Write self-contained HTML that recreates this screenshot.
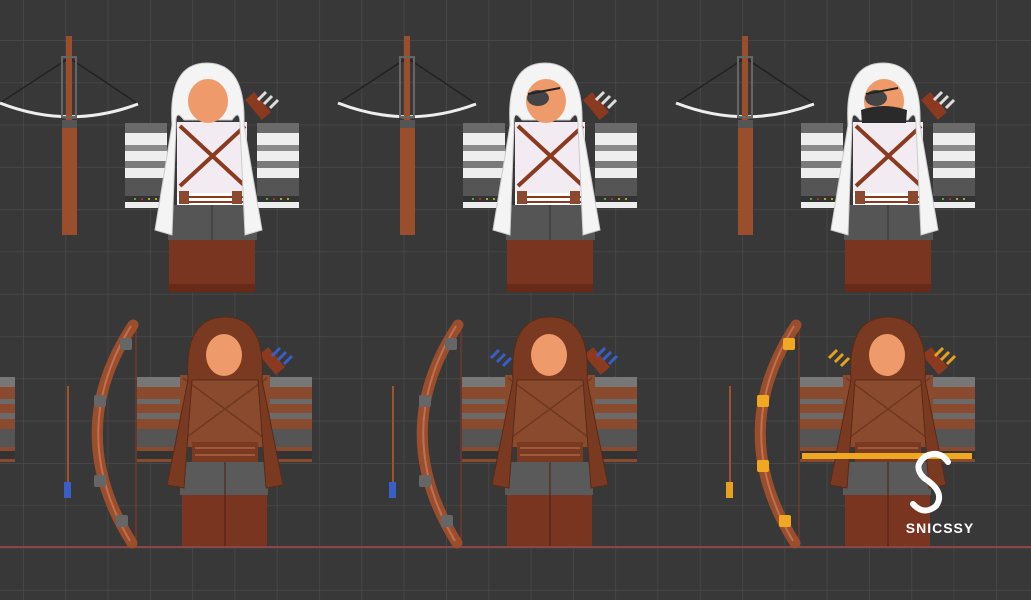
<!DOCTYPE html>
<html><head><meta charset="utf-8"><style>
html,body{margin:0;padding:0;background:#383838;overflow:hidden}
svg{display:block}
</style></head><body>
<svg width="1031" height="600" viewBox="0 0 1031 600" xmlns="http://www.w3.org/2000/svg">
<defs>
<pattern id="grid" x="23" y="40" width="42.3" height="42.3" patternUnits="userSpaceOnUse">
<path d="M0 0H42.3M0 0V42.3" stroke="#4a4a4a" stroke-width="1.5" fill="none"/>
</pattern>
<g id="warm">
<rect x="0" y="0" width="42" height="85" fill="#eee"/>
<rect x="0" y="0" width="42" height="10" fill="#6a6a6a"/>
<rect x="0" y="22" width="42" height="6" fill="#8a8a8a"/>
<rect x="0" y="38" width="42" height="7" fill="#7a7a7a"/>
<rect x="0" y="55" width="42" height="18" fill="#555"/>
<rect x="0" y="73" width="42" height="6" fill="#333"/>
<circle cx="10" cy="76" r="1" fill="#6c3"/><circle cx="17" cy="76" r="1" fill="#c33"/><circle cx="24" cy="76" r="1" fill="#dc3"/><circle cx="31" cy="76" r="1" fill="#dc3"/>
</g>
<g id="white">
<rect x="252" y="93" width="12" height="26" fill="#8b3a1f" transform="rotate(-40 258 106)"/>
<path d="M258 100l8-8M264 104l8-8M270 108l8-8" stroke="#ddd" stroke-width="3"/>
<use href="#warm" x="125" y="123"/>
<use href="#warm" x="257" y="123"/>
<rect x="168" y="205" width="89" height="35" fill="#555"/>
<line x1="212" y1="205" x2="212" y2="292" stroke="#333"/>
<rect x="169" y="240" width="86" height="52" fill="#7a3520"/>
<rect x="169" y="284" width="86" height="8" fill="#6a2a18"/>
<rect x="177" y="122" width="70" height="75" fill="#f2ecf2"/>
<path d="M180 126L245 186M245 126L180 186" stroke="#8b3a1f" stroke-width="4"/>
<rect x="177" y="193" width="70" height="12" fill="#fff"/>
<path d="M180 197H245M180 202H245" stroke="#8b3a1f" stroke-width="2"/>
<rect x="179" y="191" width="10" height="13" fill="#8b4a30"/>
<rect x="232" y="191" width="10" height="13" fill="#8b4a30"/>
<path d="M172 125Q168 63 207 63Q246 63 244 125L262 230L245 235L240 125Q240 108 232 120L184 120Q175 108 176 125L172 235L155 230Z" fill="#f4f4f4" stroke="#ccc"/>
<ellipse cx="208" cy="101" rx="20" ry="22" fill="#ef9a6a"/>
</g>
<g id="cbow">
<path d="M0 103Q35 80 69 58Q103 80 138 104" stroke="#222" stroke-width="1.5" fill="none"/>
<path d="M0 103Q69 130 138 104" stroke="#eee" stroke-width="3" fill="none"/>
<rect x="66" y="36" width="6" height="84" fill="#9a4e2c"/>
<rect x="62" y="57" width="14" height="60" fill="none" stroke="#666" stroke-width="2"/>
<rect x="62" y="120" width="15" height="115" fill="#9a4e2c"/>
<rect x="62" y="120" width="15" height="8" fill="#555"/>
</g>
<g id="barm">
<rect x="0" y="0" width="43" height="85" fill="#8a4a2e"/>
<rect x="0" y="0" width="43" height="10" fill="#777"/>
<rect x="0" y="22" width="43" height="5" fill="#6a6a6a"/>
<rect x="0" y="36" width="43" height="6" fill="#6a6a6a"/>
<rect x="0" y="52" width="43" height="18" fill="#555"/>
<rect x="0" y="74" width="43" height="8" fill="#333"/>
</g>
<g id="brown">
<rect x="266" y="348" width="12" height="26" fill="#8b3a1f" transform="rotate(-40 272 361)"/>
<use href="#barm" x="137" y="377"/>
<use href="#barm" x="269" y="377"/>
<rect x="180" y="462" width="88" height="33" fill="#5a5a5a"/>
<rect x="182" y="495" width="85" height="51" fill="#7a3520"/>
<line x1="225" y1="462" x2="225" y2="546" stroke="#4a2010"/>
<rect x="180" y="375" width="90" height="72" fill="#8a4a2e"/>
<path d="M183 378L267 440M267 378L183 440" stroke="#6f3820" stroke-width="1.5"/>
<rect x="192" y="442" width="66" height="20" fill="#7a3a22"/>
<path d="M195 448H255M195 455H255" stroke="#a05a3a" stroke-width="2"/>
<path d="M188 380Q184 317 225 317Q266 317 262 380L283 485L266 488L258 380L192 380L184 488L167 485Z" fill="#7a3a22" stroke="#5a2a16"/>
<ellipse cx="224" cy="355" rx="18" ry="21" fill="#ef9a6a"/>
</g>
<g id="bow">
<line x1="136" y1="325" x2="136" y2="541" stroke="#8b3a1f" stroke-width="1"/>
<path d="M133 325Q62 432 132 543" stroke="#9a4e2c" stroke-width="11" fill="none" stroke-linecap="round"/>
<path d="M131 326Q66 432 130 541" stroke="#c07050" stroke-width="2" fill="none"/>
</g>
<g id="band"><rect x="-6" y="0" width="12" height="12" rx="2"/></g>
</defs>
<rect width="1031" height="600" fill="#383838"/>
<rect width="1031" height="600" fill="url(#grid)"/>
<line x1="0" y1="547" x2="1031" y2="547" stroke="#a04848" stroke-width="1.5"/>

<use href="#cbow"/>
<use href="#cbow" x="338"/>
<use href="#cbow" x="676"/>
<use href="#white"/>
<use href="#white" x="338"/>
<use href="#white" x="676"/>
<ellipse cx="538" cy="98" rx="11" ry="8" fill="#444"/>
<line x1="528" y1="94" x2="560" y2="88" stroke="#222" stroke-width="2"/>
<ellipse cx="876" cy="98" rx="11" ry="8" fill="#444"/>
<line x1="866" y1="94" x2="898" y2="88" stroke="#222" stroke-width="2"/>
<path d="M861 110Q884 102 907 110L906 123L862 123Z" fill="#2a2a2a"/>
<rect x="845" y="255" width="86" height="5" fill="#7a3520"/>
<rect x="845" y="266" width="86" height="5" fill="#7a3520"/>

<use href="#barm" x="-28" y="377"/>
<use href="#bow"/>
<use href="#bow" x="325"/>
<use href="#bow" x="663"/>
<g fill="#666"><use href="#band" x="126" y="338"/><use href="#band" x="100" y="395"/><use href="#band" x="100" y="475"/><use href="#band" x="122" y="515"/>
<use href="#band" x="451" y="338"/><use href="#band" x="425" y="395"/><use href="#band" x="425" y="475"/><use href="#band" x="447" y="515"/></g>
<g fill="#f0a820"><use href="#band" x="789" y="338"/><use href="#band" x="763" y="395"/><use href="#band" x="763" y="460"/><use href="#band" x="785" y="515"/></g>
<g stroke-width="2"><line x1="68" y1="386" x2="68" y2="490" stroke="#a0522d"/><line x1="393" y1="386" x2="393" y2="490" stroke="#a0522d"/><line x1="730" y1="386" x2="730" y2="490" stroke="#a0522d"/></g>
<rect x="64" y="482" width="7" height="16" fill="#3a5ec8"/>
<rect x="389" y="482" width="7" height="16" fill="#3a5ec8"/>
<rect x="726" y="482" width="7" height="16" fill="#e8a020"/>
<use href="#brown"/>
<use href="#brown" x="325"/>
<use href="#brown" x="663"/>
<path d="M272 356l8-8M278 360l8-8M284 364l8-8" stroke="#3a5ec8" stroke-width="3"/>
<path d="M491 358l8-8M497 362l8-8M503 366l8-8M597 356l8-8M603 360l8-8M609 364l8-8" stroke="#3a5ec8" stroke-width="3"/>
<path d="M829 358l8-8M835 362l8-8M841 366l8-8M935 356l8-8M941 360l8-8M947 364l8-8" stroke="#e8a020" stroke-width="3"/>
<rect x="802" y="453" width="170" height="6" fill="#f0a820"/>

<path d="M948 462Q940 450 926 456Q912 466 924 478Q946 492 936 506Q924 516 913 504" stroke="#fff" stroke-width="6" fill="none" stroke-linecap="round"/>
<text x="940" y="533" font-family="Liberation Sans, sans-serif" font-weight="bold" font-size="14" fill="#fff" text-anchor="middle" letter-spacing="1">SNICSSY</text>
</svg>
</body></html>
